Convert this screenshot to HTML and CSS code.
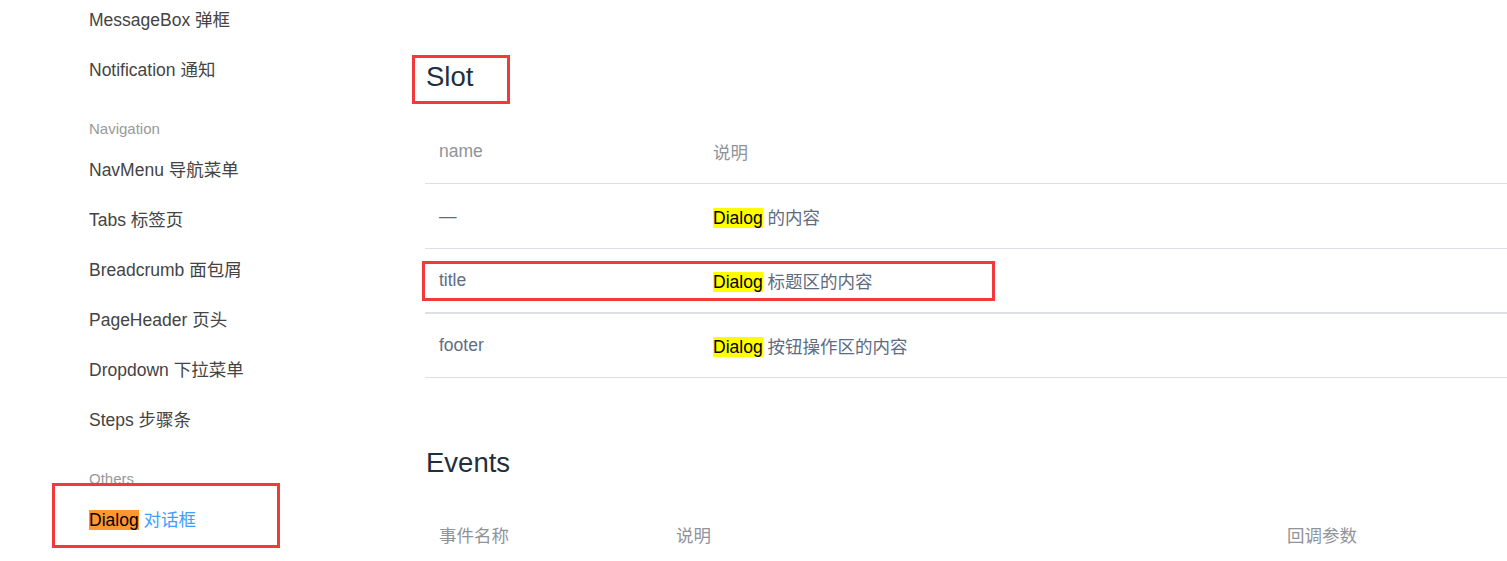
FILE: index.html
```html
<!DOCTYPE html>
<html lang="zh-CN">
<head>
<meta charset="utf-8">
<title>Dialog 对话框</title>
<link rel="stylesheet" href="styles.css">
</head>
<body>
<div class="page">
  <aside class="sidebar">
    <ul class="nav">
      <li class="nav-item">MessageBox 弹框</li>
      <li class="nav-item">Notification 通知</li>
      <li class="nav-group">Navigation</li>
      <li class="nav-item">NavMenu 导航菜单</li>
      <li class="nav-item">Tabs 标签页</li>
      <li class="nav-item">Breadcrumb 面包屑</li>
      <li class="nav-item">PageHeader 页头</li>
      <li class="nav-item">Dropdown 下拉菜单</li>
      <li class="nav-item">Steps 步骤条</li>
      <li class="nav-group">Others</li>
      <li class="nav-item active"><span class="find-active">Dialog</span> 对话框<span class="mark-box box-nav"></span></li>
    </ul>
  </aside>
  <main class="content">
    <h3 class="section-title">Slot<span class="mark-box box-slot"></span></h3>
    <table class="doc-table">
      <colgroup><col class="c-slot-name"><col></colgroup>
      <thead>
        <tr><th>name</th><th>说明</th></tr>
      </thead>
      <tbody>
        <tr><td>—</td><td><mark class="hl">Dialog</mark> 的内容</td></tr>
        <tr class="row-thick"><td class="rel">title<span class="mark-box box-row"></span></td><td><mark class="hl">Dialog</mark> 标题区的内容</td></tr>
        <tr><td>footer</td><td><mark class="hl">Dialog</mark> 按钮操作区的内容</td></tr>
      </tbody>
    </table>
    <h3 class="section-title events">Events</h3>
    <table class="doc-table events-table">
      <colgroup><col class="c-ev-name"><col class="c-ev-desc"><col></colgroup>
      <thead>
        <tr><th>事件名称</th><th>说明</th><th>回调参数</th></tr>
      </thead>
    </table>
  </main>
</div>
</body>
</html>
```

FILE: styles.css
```css
html, body {
  margin: 0;
  padding: 0;
  background: #fff;
  overflow: hidden;
}

body {
  font-family: "Liberation Sans", Arial, "Noto Sans CJK SC", sans-serif;
  width: 1507px;
  height: 561px;
}

.page {
  display: flex;
  align-items: flex-start;
}

.sidebar {
  flex: 0 0 425px;
}

.nav {
  list-style: none;
  margin: -5px 0 0 0;
  padding: 0 0 0 89px;
}

.nav-item {
  position: relative;
  font-size: 17.5px;
  line-height: 50px;
  height: 50px;
  color: #444;
  white-space: nowrap;
}

.nav-group {
  font-size: 15px;
  line-height: 33px;
  height: 33px;
  margin-top: 17px;
  color: #999;
}

.nav-item.active {
  color: #409eff;
}

.find-active {
  background: #ff9632;
  color: #000;
}

.content {
  flex: 1 1 auto;
  min-width: 0;
}

.section-title {
  position: relative;
  margin: 59px 0 0 0;
  padding-left: 1px;
  font-size: 27.5px;
  line-height: 36px;
  height: 36px;
  font-weight: 400;
  color: #1f2f3d;
}

.section-title.events {
  margin-top: 67px;
}

.doc-table {
  width: 100%;
  margin-top: 24px;
  border-collapse: collapse;
  table-layout: fixed;
}

.doc-table.events-table {
  margin-top: 21px;
}

.c-slot-name { width: 274px; }
.c-ev-name { width: 237px; }
.c-ev-desc { width: 611px; }

.doc-table th,
.doc-table td {
  padding: 0 14px;
  text-align: left;
  vertical-align: middle;
  border-bottom: 1px solid #dcdfe6;
  white-space: nowrap;
  font-size: 17.5px;
}

.doc-table th {
  height: 64px;
  font-weight: 400;
  color: #909399;
}

.doc-table td {
  height: 63px;
  color: #5e6d82;
}

.doc-table tbody tr:first-child td {
  height: 64px;
}

.doc-table tr.row-thick td {
  border-bottom: 2px solid #dcdfe6;
}

.rel {
  position: relative;
}

.hl {
  background: #ffff00;
  color: #000;
}

.mark-box {
  position: absolute;
  box-sizing: border-box;
  border: 3px solid #f33a3a;
  pointer-events: none;
}

.box-nav {
  left: -37px;
  top: -12px;
  width: 228px;
  height: 65px;
}

.box-slot {
  left: -13px;
  top: -4px;
  width: 98px;
  height: 49px;
}

.box-row {
  left: -3px;
  top: 12px;
  width: 573px;
  height: 40px;
}
```
